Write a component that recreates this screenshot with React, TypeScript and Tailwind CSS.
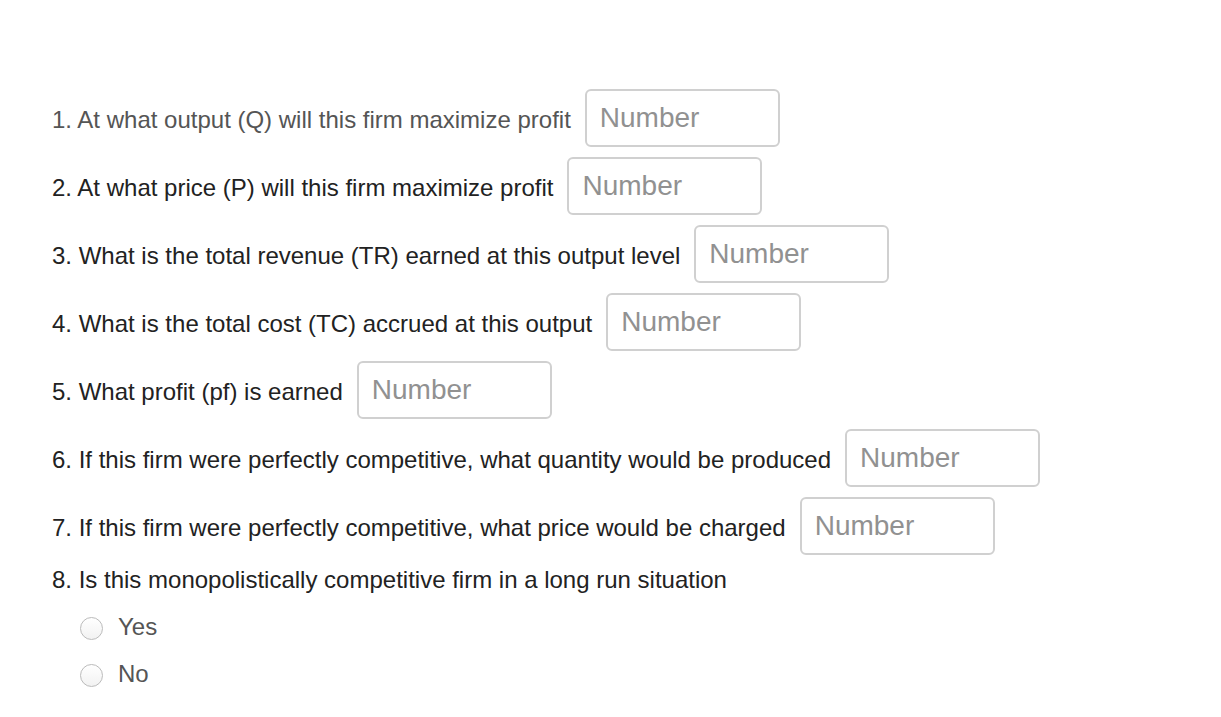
import React from "react";

const rows = [
  { text: "1. At what output (Q) will this firm maximize profit", gray: true },
  { text: "2. At what price (P) will this firm maximize profit" },
  { text: "3. What is the total revenue (TR) earned at this output level" },
  { text: "4. What is the total cost (TC) accrued at this output" },
  { text: "5. What profit (pf) is earned" },
  { text: "6. If this firm were perfectly competitive, what quantity would be produced" },
  { text: "7. If this firm were perfectly competitive, what price would be charged" },
];

export default function App() {
  return (
    <div
      className="w-[1221px] h-[717px] bg-white pl-[52px] pt-[89px] text-[24px] leading-[30px] text-[#222]"
      style={{ fontFamily: '"Liberation Sans", Arial, sans-serif' }}
    >
      {rows.map((r, i) => (
        <div key={i} className="flex items-center h-[58px] mb-[10px]">
          <span className={r.gray ? "text-[#555] pt-[3px]" : "text-[#222] pt-[3px]"}>{r.text}</span>
          <input
            type="text"
            placeholder="Number"
            className="ml-[14px] w-[195px] h-[58px] border-2 border-[#d0d0d0] rounded-[6px] px-[13px] pb-[1px] text-[28px] placeholder:text-[#919191] outline-none"
            style={{ fontFamily: '"Liberation Sans", Arial, sans-serif' }}
          />
        </div>
      ))}
      <div className="mt-[5px] h-[30px] flex items-center">
        8. Is this monopolistically competitive firm in a long run situation
      </div>
      <div className="flex flex-col mt-[8px]">
        {["Yes", "No"].map((l) => (
          <label key={l} className="flex items-center h-[47px] pl-[28px] text-[#555]">
            <span className="w-[23px] h-[23px] rounded-full border border-[#bbb] bg-gradient-to-b from-white to-[#f2f2f2] mt-[4px]" />
            <span className="ml-[15px]">{l}</span>
          </label>
        ))}
      </div>
    </div>
  );
}
